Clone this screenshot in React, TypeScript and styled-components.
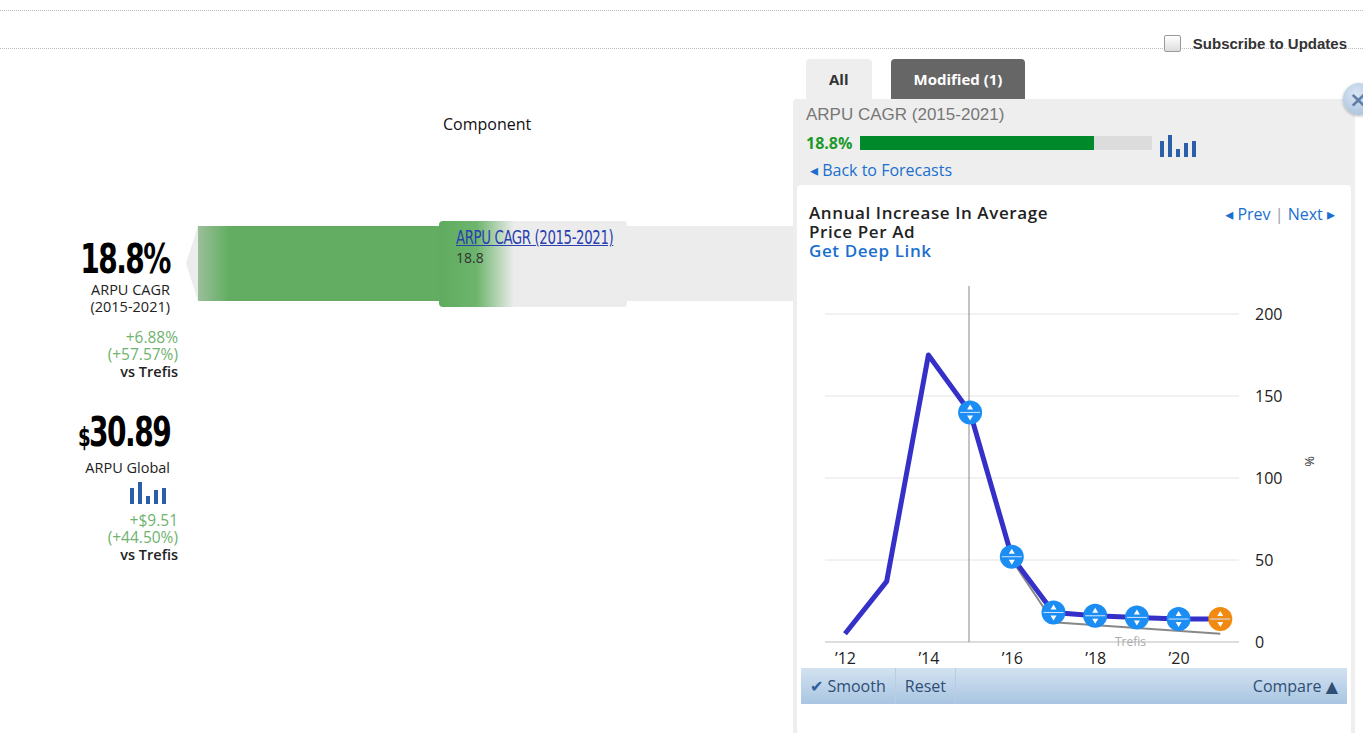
import React from 'react';
import styled, { createGlobalStyle } from 'styled-components';

const Global = createGlobalStyle`
  html, body { margin: 0; padding: 0; background: #fff; overflow: hidden; }
  body { font-family: 'Open Sans', 'DejaVu Sans', sans-serif; width: 1363px; height: 733px; }
`;

const Page = styled.div`
  position: relative;
  width: 1363px;
  height: 733px;
`;

const TopLine = styled.div`
  height: 10px;
  border-bottom: 1px dotted #bbb;
`;

const SubLine = styled.div`
  height: 37px;
  border-bottom: 1px dotted #bbb;
`;

const Subscribe = styled.label`
  position: absolute;
  top: 35px;
  right: 16px;
  display: flex;
  align-items: center;
  gap: 12px;
  font: bold 15px 'Liberation Sans', Arial, sans-serif;
  color: #333;
`;

const Box = styled.span`
  width: 15px;
  height: 15px;
  border: 1px solid #999;
  border-radius: 2px;
  background: linear-gradient(#fff, #ddd);
`;

const Body = styled.div`
  display: flex;
  height: 684px;
`;

const LeftCol = styled.div`
  width: 178px;
  padding-top: 188px;
  display: flex;
  flex-direction: column;
  align-items: flex-end;
`;

const Metric = styled.div`
  display: flex;
  flex-direction: column;
  align-items: flex-end;
  margin-bottom: 30px;
`;

const BigNum = styled.div`
  font: bold 40px 'DejaVu Sans Condensed', 'DejaVu Sans', sans-serif;
  letter-spacing: -2px;
  transform: scaleX(0.78);
  transform-origin: right;
  color: #000;
  line-height: 44px;
  margin-right: 8px;
`;

const Dollar = styled.span`
  font-size: 26px;
`;

const Label = styled.div`
  font-size: 14.5px;
  font-weight: 500;
  color: #222;
  line-height: 17px;
  text-align: right;
  margin-right: 8px;
`;

const Delta = styled.div`
  font-size: 15.5px;
  color: #6fb36f;
  line-height: 17px;
  text-align: right;
  margin-top: 14px;
`;

const Vs = styled.div`
  font-size: 14.5px;
  font-weight: 600;
  color: #222;
  line-height: 17px;
`;

const Bars = styled.svg`
  margin: 6px 8px 0 0;
`;

const Middle = styled.div`
  flex: 1;
  display: flex;
  flex-direction: column;
`;

const CompHead = styled.div`
  font-size: 16px;
  color: #111;
  margin: 64px 0 0 265px;
  height: 32px;
`;

const BarRow = styled.div`
  position: relative;
  margin-top: 76px;
  height: 90px;
`;

const Track = styled.div`
  position: absolute;
  left: 8px;
  right: 0;
  top: 5px;
  height: 75px;
  background: #ececec;
  clip-path: polygon(0 50%, 12px 0, 100% 0, 100% 100%, 12px 100%);
`;

const Fill = styled.div`
  position: absolute;
  left: 20px;
  width: 310px;
  top: 5px;
  height: 75px;
  background: linear-gradient(90deg, #9bbf9b 0%, #62ad62 10%, #62ad62 100%);
`;

const Tag = styled.div`
  position: absolute;
  left: 261px;
  top: 0;
  width: 188px;
  height: 86px;
  border-radius: 4px;
  background: linear-gradient(90deg, #5fab5f 0%, #6db56d 20%, #ececec 40%);
  padding: 5px 0 0 17px;
  box-sizing: border-box;
`;

const TagLink = styled.a`
  display: block;
  font: 19px 'DejaVu Sans Condensed', sans-serif;
  letter-spacing: -0.5px;
  transform: scaleX(0.78);
  transform-origin: left;
  color: #2a3fb0;
  text-decoration: underline;
  white-space: nowrap;
`;

const TagVal = styled.div`
  font-size: 14px;
  color: #333;
`;

const Right = styled.div`
  width: 562px;
  margin-right: 8px;
  display: flex;
  flex-direction: column;
  position: relative;
`;

const Tabs = styled.div`
  display: flex;
  gap: 19px;
  padding: 10px 0 0 13px;
`;

const Tab = styled.div<{ $active?: boolean }>`
  height: 40px;
  padding: 0 23px;
  display: flex;
  align-items: center;
  border-radius: 4px 4px 0 0;
  font-weight: bold;
  font-size: 15px;
  background: ${p => (p.$active ? '#666' : '#eee')};
  color: ${p => (p.$active ? '#fff' : '#333')};
`;

const Close = styled.div`
  position: absolute;
  top: 34px;
  right: -20px;
  width: 32px;
  height: 32px;
  border-radius: 50%;
  background: radial-gradient(circle at 40% 35%, #d8e6f5, #9fb9d6);
  box-shadow: 0 1px 3px rgba(0,0,0,0.3);
  color: #5c7ea8;
  font: bold 22px 'DejaVu Sans', sans-serif;
  display: flex;
  align-items: center;
  padding-left: 6px;
  box-sizing: border-box;
`;

const Panel = styled.div`
  flex: 1;
  background: #eee;
  border-radius: 4px 4px 0 0;
  padding: 6px 4px 0 4px;
  display: flex;
  flex-direction: column;
`;

const PTitle = styled.div`
  font: 17px 'Liberation Sans', Arial, sans-serif;
  color: #777;
  padding-left: 9px;
`;

const ProgRow = styled.div`
  display: flex;
  align-items: center;
  padding: 4px 0 0 9px;
  gap: 8px;
`;

const Pct = styled.div`
  font-weight: bold;
  font-size: 16px;
  color: #1d9a2b;
`;

const Prog = styled.div`
  width: 292px;
  height: 14px;
  background: linear-gradient(90deg, #00892b 80%, #dcdcdc 80%);
`;

const Back = styled.div`
  font-size: 16px;
  color: #1a6fcf;
  padding: 2px 0 4px 13px;
`;

const Card = styled.div`
  flex: 1;
  background: #fff;
  border-radius: 4px 4px 0 0;
  padding: 18px 12px 0 12px;
  display: flex;
  flex-direction: column;
`;

const CardHead = styled.div`
  display: flex;
  justify-content: space-between;
`;

const CTitle = styled.div`
  font-size: 17px;
  font-weight: 600;
  letter-spacing: 0.6px;
  line-height: 19px;
  color: #222;
`;

const DeepLink = styled.div`
  color: #1a6fcf;
`;

const Nav = styled.div`
  font-size: 16px;
  color: #1a6fcf;
  margin-right: 4px;
`;

const Footer = styled.div`
  height: 36px;
  margin: 0 -8px;
  background: linear-gradient(#d3e2f1, #a9c5e2);
  display: flex;
  align-items: center;
  font-size: 16px;
  color: #2e4e74;
`;

const FBtn = styled.div<{ $grow?: boolean }>`
  padding: 0 9px;
  height: 100%;
  display: flex;
  align-items: center;
  gap: 4px;
  border-right: ${p => (p.$grow ? 'none' : '1px solid #b9cde2')};
  ${p => p.$grow && 'margin-left: auto;'}
`;

const MiniBars = ({ color = '#2a5ea8' }: { color?: string }) => (
  <Bars width="40" height="22" viewBox="0 0 40 22">
    {[[0, 6, 16], [8, 0, 22], [16, 14, 8], [24, 8, 14], [32, 6, 16]].map(([x, y, h], i) => (
      <rect key={i} x={x} y={y} width="4" height={h} fill={color} />
    ))}
  </Bars>
);

const blue: [number, number][] = [
  [2012, 5], [2013, 37], [2014, 175], [2015, 140], [2016, 52], [2017, 18], [2018, 16], [2019, 15], [2020, 14], [2021, 14],
];
const gray: [number, number][] = [[2016, 50], [2017, 12], [2021, 5]];
const X = (y: number) => 48 + (y - 2012) * 41.7;
const Y = (v: number) => 382 - v * 1.64;

const Handle = ({ x, y, orange }: { x: number; y: number; orange?: boolean }) => (
  <g transform={`translate(${x},${y})`}>
    <circle r="12" fill={orange ? '#f28a12' : '#1c8df3'} />
    <line x1="-10" x2="10" y1="0" y2="0" stroke="#cfe6ff" strokeWidth="1" />
    <path d="M-3 -3 L0 -8 L3 -3 Z M-3 3 L0 8 L3 3 Z" fill="#fff" />
  </g>
);

const Chart = () => (
  <svg width="548" height="408" viewBox="0 0 548 408" style={{ marginLeft: -12 }}>
    {[200, 150, 100, 50].map(v => (
      <g key={v}>
        <line x1="28" x2="442" y1={Y(v)} y2={Y(v)} stroke="#e4e4e4" />
        <text x="458" y={Y(v) + 6} fontSize="16" fill="#222" fontFamily="Open Sans">{v}</text>
      </g>
    ))}
    <line x1="28" x2="442" y1={Y(0)} y2={Y(0)} stroke="#bbb" />
    <text x="458" y={Y(0) + 6} fontSize="16" fill="#222" fontFamily="Open Sans">0</text>
    <line x1="172" x2="172" y1="26" y2={Y(0)} stroke="#888" />
    <text x="508" y="196" fontSize="13" fill="#333" transform="rotate(90 508 196)">%</text>
    {['12', '14', '16', '18', '20'].map((t, i) => (
      <text key={t} x={X(2012 + i * 2) - 10} y={Y(0) + 22} fontSize="16" fill="#222" fontFamily="Open Sans">’{t}</text>
    ))}
    <text x="318" y={Y(0) + 4} fontSize="12" fill="#aaa">Trefis</text>
    <polyline points={gray.map(([x, v]) => `${X(x)},${Y(v)}`).join(' ')} fill="none" stroke="#888" strokeWidth="2" />
    <polyline points={blue.map(([x, v]) => `${X(x)},${Y(v)}`).join(' ')} fill="none" stroke="#3530c8" strokeWidth="5" strokeLinejoin="round" />
    {blue.slice(3).map(([x, v], i) => (
      <Handle key={x} x={X(x)} y={Y(v)} orange={i === 6} />
    ))}
  </svg>
);

export default function App() {
  return (
    <Page>
      <Global />
      <TopLine />
      <SubLine />
      <Subscribe><Box />Subscribe to Updates</Subscribe>
      <Body>
        <LeftCol>
          <Metric>
            <BigNum>18.8%</BigNum>
            <Label>ARPU CAGR<br />(2015-2021)</Label>
            <Delta>+6.88%<br />(+57.57%)</Delta>
            <Vs>vs Trefis</Vs>
          </Metric>
          <Metric>
            <BigNum><Dollar>$</Dollar>30.89</BigNum>
            <Label>ARPU Global</Label>
            <MiniBars />
            <Delta style={{ marginTop: 8 }}>+$9.51<br />(+44.50%)</Delta>
            <Vs>vs Trefis</Vs>
          </Metric>
        </LeftCol>
        <Middle>
          <CompHead>Component</CompHead>
          <BarRow>
            <Track />
            <Fill />
            <Tag>
              <TagLink>ARPU CAGR (2015-2021)</TagLink>
              <TagVal>18.8</TagVal>
            </Tag>
          </BarRow>
        </Middle>
        <Right>
          <Tabs>
            <Tab>All</Tab>
            <Tab $active>Modified (1)</Tab>
          </Tabs>
          <Close>×</Close>
          <Panel>
            <PTitle>ARPU CAGR (2015-2021)</PTitle>
            <ProgRow>
              <Pct>18.8%</Pct>
              <Prog />
              <MiniBars />
            </ProgRow>
            <Back>◂ Back to Forecasts</Back>
            <Card>
              <CardHead>
                <CTitle>
                  Annual Increase In Average<br />Price Per Ad
                  <DeepLink>Get Deep Link</DeepLink>
                </CTitle>
                <Nav>◂ Prev <span style={{ color: '#999' }}>|</span> Next ▸</Nav>
              </CardHead>
              <Chart />
              <Footer>
                <FBtn><span style={{ color: '#2e5e9c' }}>✔</span>Smooth</FBtn>
                <FBtn>Reset</FBtn>
                <FBtn $grow>Compare ▲</FBtn>
              </Footer>
            </Card>
          </Panel>
        </Right>
      </Body>
    </Page>
  );
}
